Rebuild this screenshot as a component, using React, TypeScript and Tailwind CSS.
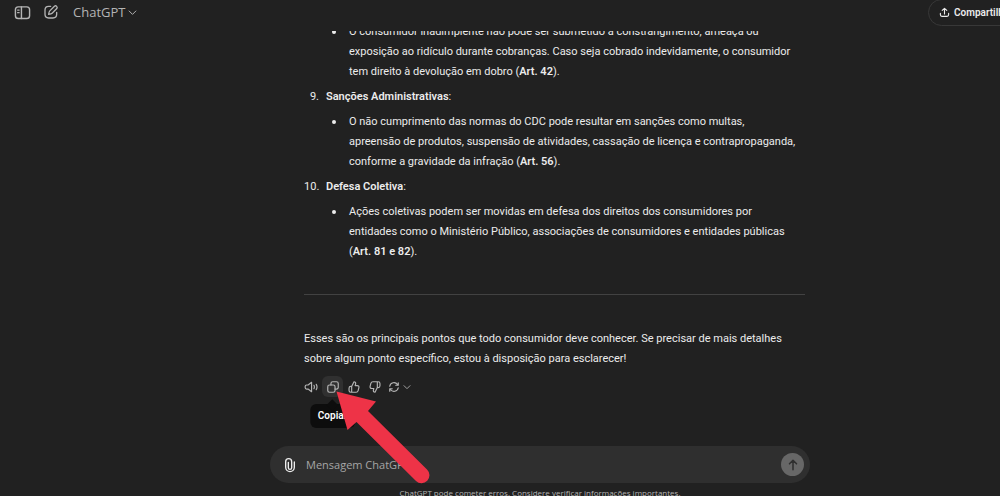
import React from 'react';

type IconProps = { className?: string; children: React.ReactNode; width?: number };

function Icon({ className = 'size-[14px]', children, width = 2 }: IconProps) {
  return (
    <svg
      viewBox="0 0 24 24"
      fill="none"
      stroke="currentColor"
      strokeWidth={width}
      strokeLinecap="round"
      strokeLinejoin="round"
      className={className}
      aria-hidden="true"
    >
      {children}
    </svg>
  );
}

function Chevron({ className }: { className?: string }) {
  return (
    <Icon className={className} width={2.6}>
      <path d="M3 8l9 9 9-9" />
    </Icon>
  );
}

function Header() {
  return (
    <header className="flex h-[31px] shrink-0 items-start justify-between overflow-hidden pl-[14px] text-[#b4b4b4]">
      <div className="flex h-6 items-center">
        <button type="button" aria-label="Barra lateral" className="mr-3">
          <Icon className="h-[17px] w-[17px]">
            <rect x="2" y="4" width="20" height="16.5" rx="4" />
            <path d="M10.5 4v16.5M5.2 8.6h2M5.2 12.2h2" />
          </Icon>
        </button>
        <button type="button" aria-label="Nova conversa" className="mr-[14px]">
          <Icon className="size-4">
            <path d="M11.5 3.5H8.5C4.5 3.5 3 5 3 9v6.5c0 4 1.5 5.5 5.5 5.5H15c4 0 5.5-1.5 5.5-5.5v-3" />
            <path d="M17.2 3.3a2.5 2.5 0 0 1 3.5 3.5l-7 7c-1 1-2.5 1.4-5.2 1.7.3-2.7.7-4.2 1.7-5.2z" />
          </Icon>
        </button>
        <button type="button" className="flex items-center gap-[3px] font-['Open_Sans',sans-serif] text-[13px]">
          ChatGPT
          <Chevron className="size-[9px]" />
        </button>
      </div>
      <button
        type="button"
        className="-mt-px -mr-5 flex h-[27px] w-[92px] shrink-0 items-center gap-1 rounded-full border border-[#383838] pl-[10px] text-[10px] font-semibold text-[#ececec]"
      >
        <Icon className="size-[11px] shrink-0" width={2.4}>
          <path d="M12 15V3M7 7.5L12 3l5 4.5M3 14v3c0 2.5 1 3.5 3.5 3.5h11c2.5 0 3.5-1 3.5-3.5v-3" />
        </Icon>
        Compartilhar
      </button>
    </header>
  );
}

function Bullet({ children }: { children: React.ReactNode }) {
  return (
    <ul>
      <li className="flex gap-[13px] pl-7">
        <span className="mt-2 size-1 shrink-0 rounded-full bg-[#ececec]" />
        <p>{children}</p>
      </li>
    </ul>
  );
}

function Topic({ number, title, children }: { number: number; title: string; children: React.ReactNode }) {
  return (
    <li className="flex flex-col gap-[5px]">
      <div className="flex gap-[7px]">
        <span className="w-[15px] shrink-0 text-right">{number}.</span>
        <h3>
          <strong className="font-semibold">{title}</strong>:
        </h3>
      </div>
      {children}
    </li>
  );
}

function Actions() {
  return (
    <div className="mt-[7px] flex h-[21px] items-center text-[#b4b4b4]">
      <button type="button" aria-label="Ler em voz alta" className="mr-1">
        <Icon>
          <path d="M13 4v16l-6-4.5H4.5C3 15.5 2 14.5 2 13v-2c0-1.5 1-2.5 2.5-2.5H7zM17 9c1 1.8 1 4.2 0 6M21 7.5c1.6 2.7 1.6 6.3 0 9" />
        </Icon>
      </button>
      <div className="relative mr-1">
        <button
          type="button"
          aria-label="Copiar"
          className="flex size-[21px] items-center justify-center rounded-md bg-[#303030]"
        >
          <Icon>
            <path d="M8.5 8.5V6a3 3 0 0 1 3-3H18a3 3 0 0 1 3 3v6.5a3 3 0 0 1-3 3h-2.5" />
            <rect x="3" y="8.5" width="12.5" height="12.5" rx="3" />
          </Icon>
        </button>
        <div
          role="tooltip"
          className="absolute top-7 left-1/2 flex h-6 -translate-x-1/2 items-center rounded-md bg-[#0d0d0d] px-2 text-[10px] font-semibold text-white"
        >
          <span className="absolute -top-[3px] left-1/2 size-2 -translate-x-1/2 rotate-45 bg-[#0d0d0d]" />
          Copiar
        </div>
      </div>
      <button type="button" aria-label="Boa resposta" className="mr-[7px]">
        <Icon>
          <path d="M8 11L12 3c2.2 0 3.2 1.5 2.8 3.5L14 9.5h3.5c2.3 0 3.4 1.6 2.9 3.7l-1.3 5c-.5 1.8-1.7 2.8-3.5 2.8H6.5c-2 0-3-1-3-3v-4c0-2 1-3 3-3zM8 11v10" />
        </Icon>
      </button>
      <button type="button" aria-label="Resposta ruim" className="mr-[6px]">
        <Icon>
          <path d="M16 13L12 21c-2.2 0-3.2-1.5-2.8-3.5l.8-3H6.5c-2.3 0-3.4-1.6-2.9-3.7l1.3-5C5.4 4 6.6 3 8.4 3h9.1c2 0 3 1 3 3v4c0 2-1 3-3 3zM16 13V3" />
        </Icon>
      </button>
      <button type="button" aria-label="Gerar novamente" className="flex items-center gap-[3px]">
        <Icon className="size-3" width={2.4}>
          <path d="M3.5 10.5a8.6 8.6 0 0 1 15.5-3.5l1 1.5M20.5 3.5v5h-5M20.5 13.5A8.6 8.6 0 0 1 5 17l-1-1.5M3.5 20.5v-5h5" />
        </Icon>
        <Chevron className="size-2" />
      </button>
    </div>
  );
}

function Composer() {
  return (
    <form className="flex h-[37px] items-center rounded-full bg-[#2f2f2f] pr-[6px] pl-3">
      <button type="button" aria-label="Anexar" className="mr-2 text-[#ececec]">
        <Icon className="size-4">
          <path d="M9.500 8v8a2.500 2.500 0 0 0 5 0V7a4.500 4.500 0 0 0-9 0v8.500a6.500 6.500 0 0 0 13 0V7.500" />
        </Icon>
      </button>
      <input
        type="text"
        aria-label="Mensagem"
        placeholder="Mensagem ChatGPT"
        className="min-w-0 flex-1 bg-transparent font-['Open_Sans',sans-serif] text-[11px] text-white outline-none placeholder:text-[#a6a6a6]"
      />
      <button
        type="button"
        aria-label="Enviar"
        className="flex size-[23px] items-center justify-center rounded-full bg-[#676767] text-[#2f2f2f]"
      >
        <Icon width={2.6}>
          <path d="M12 20V4M6 10l6-6 6 6" />
        </Icon>
      </button>
    </form>
  );
}

export default function App() {
  return (
    <div className="relative flex h-screen flex-col overflow-hidden bg-[#212121] font-['Roboto','Noto_Sans',sans-serif] text-[11px] leading-5 text-[#ececec]">
      <Header />
      <main className="min-h-0 flex-1 overflow-hidden pl-20">
        <div className="mx-auto -mt-[9px] max-w-[540px] pr-[5px] pl-[34px]">
          <ol className="flex flex-col gap-[5px]">
            <li>
              <Bullet>
                O consumidor inadimplente não pode ser submetido a constrangimento, ameaça ou
                <br />
                exposição ao ridículo durante cobranças. Caso seja cobrado indevidamente, o consumidor
                <br />
                tem direito à devolução em dobro (<strong className="font-semibold">Art. 42</strong>).
              </Bullet>
            </li>
            <Topic number={9} title="Sanções Administrativas">
              <Bullet>
                O não cumprimento das normas do CDC pode resultar em sanções como multas,
                <br />
                apreensão de produtos, suspensão de atividades, cassação de licença e contrapropaganda,
                <br />
                conforme a gravidade da infração (<strong className="font-semibold">Art. 56</strong>).
              </Bullet>
            </Topic>
            <Topic number={10} title="Defesa Coletiva">
              <Bullet>
                Ações coletivas podem ser movidas em defesa dos direitos dos consumidores por
                <br />
                entidades como o Ministério Público, associações de consumidores e entidades públicas
                <br />(<strong className="font-semibold">Art. 81 e 82</strong>).
              </Bullet>
            </Topic>
          </ol>
          <hr className="mt-8 mb-[34px] border-[#424242]" />
          <p>
            Esses são os principais pontos que todo consumidor deve conhecer. Se precisar de mais detalhes
            <br />
            sobre algum ponto específico, estou à disposição para esclarecer!
          </p>
          <Actions />
        </div>
      </main>
      <footer className="shrink-0 pl-20">
        <div className="mx-auto max-w-[540px]">
          <Composer />
          <p className="h-[13px] text-center font-['Open_Sans',sans-serif] text-[8px] leading-5 text-[#b4b4b4]">
            ChatGPT pode cometer erros. Considere verificar informações importantes.
          </p>
        </div>
      </footer>
      <svg
        viewBox="0 0 96 96"
        className="pointer-events-none absolute top-[390px] left-[335px] size-24"
        aria-hidden="true"
      >
        <path
          d="M1.500 1.500L41 11.500 33 21l59 58.500a7.800 7.800 0 0 1-11 11.500L21.500 32 12.500 40z"
          fill="#ee3347"
        />
      </svg>
    </div>
  );
}
